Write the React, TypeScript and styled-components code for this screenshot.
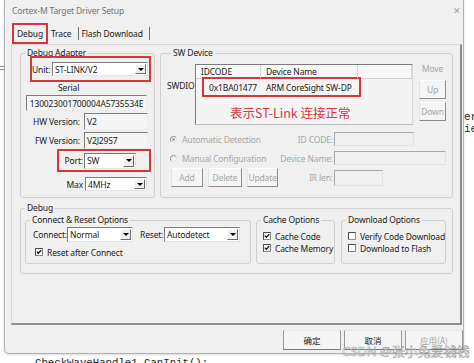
import React from "react";
import styled, { createGlobalStyle, css } from "styled-components";

const GlobalStyle = createGlobalStyle`
  html, body {
    margin: 0;
    padding: 0;
    background: #ffffff;
  }
  body {
    font-family: "Noto Sans", "Noto Sans CJK SC", sans-serif;
    font-size: 8.5px;
    letter-spacing: -0.15px;
    color: #1b1b1b;
  }
  *, *::before, *::after {
    box-sizing: border-box;
  }
`;

const RED = "#d6373d";
const GRAY_TEXT = "#a6a6a6";

// little drawn controls
function CheckBox({ checked }: { checked?: boolean }) {
  return (
    <svg width="8" height="8" viewBox="0 0 8 8">
      <rect x="0.5" y="0.5" width="7" height="7" fill="#fff" stroke="#8a8a8a" />
      <path d="M0.5 7.5 V0.5 H7.5" fill="none" stroke="#4a4a4a" />
      {checked && (
        <path d="M1.8 3.6 L3.3 5.3 L6.3 2.1" fill="none" stroke="#111" strokeWidth="1.3" />
      )}
    </svg>
  );
}

function RadioDot({ selected }: { selected?: boolean }) {
  return (
    <svg width="7" height="7" viewBox="0 0 7 7">
      <circle cx="3.5" cy="3.5" r="3" fill="#f4f4f4" stroke="#e2e2e2" />
      <path d="M1.2 5.6 A3 3 0 0 1 5.8 1.4" fill="none" stroke="#8e8e8e" />
      {selected && <circle cx="3.5" cy="3.5" r="1.3" fill="#9a9a9a" />}
    </svg>
  );
}

function Combo({ value, w, h = 15 }: { value: string; w: number; h?: number }) {
  return (
    <Select style={{ width: w, height: h }}>
      <SelectValue>{value}</SelectValue>
      <DropButton />
    </Select>
  );
}

function App() {
  return (
    <>
      <GlobalStyle />
      <Screen>
        <EditorMarks />
        <EditorTail>{"er\nie"}</EditorTail>
        <Window>
          <TitleBar>
            <Caption>Cortex-M Target Driver Setup</Caption>
            <CloseGlyph>✕</CloseGlyph>
          </TitleBar>
          <TabStrip>
            <Tab $active>Debug</Tab>
            <Tab>Trace</Tab>
            <Tab>Flash Download</Tab>
          </TabStrip>

          <TabPanel>
            <TopRow>
              <AdapterGroup>
                <GroupTitle>Debug Adapter</GroupTitle>
                <UnitCallout>
                  <span>Unit:</span>
                  <Combo value="ST-LINK/V2" w={96} h={14} />
                </UnitCallout>
                <SerialCaption>Serial</SerialCaption>
                <SerialBox>130023001700004A5735534E</SerialBox>
                <VersionRow>
                  <RowLabel>HW Version:</RowLabel>
                  <ValueBox>V2</ValueBox>
                </VersionRow>
                <VersionRow>
                  <RowLabel>FW Version:</RowLabel>
                  <ValueBox>V2J29S7</ValueBox>
                </VersionRow>
                <PortCallout>
                  <RowLabel>Port:</RowLabel>
                  <Combo value="SW" w={52} h={16} />
                </PortCallout>
                <MaxRow>
                  <RowLabel>Max</RowLabel>
                  <Combo value="4MHz" w={62} h={14} />
                </MaxRow>
              </AdapterGroup>

              <DeviceGroup>
                <GroupTitle>SW Device</GroupTitle>
                <ChainRow>
                  <PortName>SWDIO</PortName>
                  <ChainList>
                    <ListHeader>
                      <HeaderCell $w={65}>IDCODE</HeaderCell>
                      <HeaderCell $w={97}>Device Name</HeaderCell>
                      <HeaderCell />
                    </ListHeader>
                    <DeviceRow>
                      <DeviceCell $w={57}>0x1BA01477</DeviceCell>
                      <DeviceCell>ARM CoreSight SW-DP</DeviceCell>
                    </DeviceRow>
                    <StatusNote>表示ST-Link 连接正常</StatusNote>
                  </ChainList>
                  <MoveColumn>
                    <MoveCaption>Move</MoveCaption>
                    <SideButton>Up</SideButton>
                    <SideButton>Down</SideButton>
                  </MoveColumn>
                </ChainRow>

                <ConfigRow $mt={7} $h={14}>
                  <ConfigLeft>
                    <RadioOption>
                      <RadioDot selected />
                      Automatic Detection
                    </RadioOption>
                  </ConfigLeft>
                  <ConfigLabel>ID CODE:</ConfigLabel>
                  <DisabledBox $w={80} $h={14} />
                </ConfigRow>
                <ConfigRow $mt={5} $h={14}>
                  <ConfigLeft>
                    <RadioOption>
                      <RadioDot />
                      Manual Configuration
                    </RadioOption>
                  </ConfigLeft>
                  <ConfigLabel>Device Name:</ConfigLabel>
                  <DisabledBox $w={112} $h={14} />
                </ConfigRow>
                <ConfigRow $mt={3} $h={19}>
                  <ConfigLeft>
                    <ChainButtons>
                      <SideButton $w={34}>Add</SideButton>
                      <SideButton $w={37}>Delete</SideButton>
                      <SideButton $w={33}>Update</SideButton>
                    </ChainButtons>
                  </ConfigLeft>
                  <ConfigLabel>IR len:</ConfigLabel>
                  <DisabledBox $w={49} $h={16} />
                </ConfigRow>
              </DeviceGroup>
            </TopRow>

            <DebugGroup>
              <GroupTitle>Debug</GroupTitle>
              <DebugBody>
                <ConnectGroup>
                  <GroupTitle>Connect &amp; Reset Options</GroupTitle>
                  <ConnectRow>
                    <InlineLabel $w={34}>Connect:</InlineLabel>
                    <Combo value="Normal" w={66} />
                    <InlineLabel $w={24} $ml={7}>
                      Reset:
                    </InlineLabel>
                    <Combo value="Autodetect" w={76} />
                  </ConnectRow>
                  <CheckRow $first>
                    <CheckBox checked />
                    Reset after Connect
                  </CheckRow>
                </ConnectGroup>
                <CacheGroup>
                  <GroupTitle>Cache Options</GroupTitle>
                  <CheckList>
                    <CheckRow>
                      <CheckBox checked />
                      Cache Code
                    </CheckRow>
                    <CheckRow>
                      <CheckBox checked />
                      Cache Memory
                    </CheckRow>
                  </CheckList>
                </CacheGroup>
                <DownloadGroup>
                  <GroupTitle>Download Options</GroupTitle>
                  <CheckList>
                    <CheckRow>
                      <CheckBox />
                      Verify Code Download
                    </CheckRow>
                    <CheckRow>
                      <CheckBox />
                      Download to Flash
                    </CheckRow>
                  </CheckList>
                </DownloadGroup>
              </DebugBody>
            </DebugGroup>
          </TabPanel>

          <DialogButtons>
            <DialogButton>确定</DialogButton>
            <DialogButton>取消</DialogButton>
            <DialogButton $disabled>应用(A)</DialogButton>
          </DialogButtons>
        </Window>
        <CodeLine>CheckWaveHandle1.CanInit();</CodeLine>
        <Watermark>CSDN @张小兔爱钱钱</Watermark>
      </Screen>
    </>
  );
}

const Screen = styled.div`
  position: relative;
  width: 474px;
  height: 363px;
  overflow: hidden;
  background: #ffffff;
  display: flex;
  flex-direction: column;
`;

// bits of the code editor behind the dialog
const EditorMarks = styled.div`
  position: absolute;
  left: 0;
  top: 66px;
  width: 5px;
  height: 4px;
  border-top: 1px solid #8a8a8a;
  border-bottom: 1px solid #8a8a8a;
`;

const EditorTail = styled.div`
  position: absolute;
  left: 464px;
  top: 111px;
  font-family: "Liberation Mono", monospace;
  font-size: 11px;
  line-height: 12px;
  letter-spacing: 0;
  color: #2a2a2a;
  white-space: pre;
`;

const Window = styled.div`
  flex: none;
  margin-left: 4px;
  width: 460px;
  height: 354px;
  display: flex;
  flex-direction: column;
  background: #f0f0f0;
  border: 1px solid #b2b2b2;
  border-top: none;
  border-radius: 0 0 5px 5px;
  box-shadow: 0 1px 2px rgba(0, 0, 0, 0.15);
`;

const TitleBar = styled.div`
  flex: none;
  height: 21px;
  display: flex;
  align-items: center;
  justify-content: space-between;
  padding: 0 2px 0 7px;
`;

const Caption = styled.span`
  color: #737373;
`;

const CloseGlyph = styled.span`
  font-size: 9px;
  color: #a0a0a0;
`;

const TabStrip = styled.div`
  flex: none;
  height: 23px;
  display: flex;
  align-items: flex-end;
  padding-left: 7px;
`;

const Tab = styled.div<{ $active?: boolean }>`
  height: 21px;
  display: flex;
  align-items: center;
  color: #1a1a1a;
  ${(p) =>
    p.$active
      ? css`
          padding: 0 3px;
          border: 2px solid ${RED};
        `
      : css`
          padding-left: 3px;
          &::after {
            content: "";
            width: 1px;
            height: 13px;
            margin-left: 6px;
            background: #6e6e6e;
          }
        `}
`;

const TabPanel = styled.div`
  flex: none;
  height: 281px;
  margin: 0 1px 0 6px;
  padding: 2px 7px 0 8px;
  border: 1px solid #dadada;
  border-right: 2px solid #8e8e8e;
  border-bottom: 2px solid #8e8e8e;
  display: flex;
  flex-direction: column;
`;

const TopRow = styled.div`
  display: flex;
  gap: 5px;
  height: 151px;
`;

const Group = styled.fieldset`
  margin: 0;
  padding: 0;
  min-width: 0;
  border: 1px solid #d0d0d0;
  border-radius: 3px;
  display: flex;
  flex-direction: column;
`;

const GroupTitle = styled.legend`
  margin-left: 4px;
  padding: 0 2px;
  line-height: 12px;
  color: #1b1b1b;
`;

const AdapterGroup = styled(Group)`
  width: 135px;
`;

const Callout = styled.div`
  display: flex;
  align-items: center;
  border: 2px solid ${RED};
`;

const UnitCallout = styled(Callout)`
  margin: -3px 0 0 9px;
  width: 121px;
  height: 26px;
  justify-content: space-between;
  padding-right: 1px;
`;

const Select = styled.div`
  display: flex;
  align-items: stretch;
  background: #ffffff;
  border: 1px solid;
  border-color: #7c7c7c #e4e4e4 #e4e4e4 #7c7c7c;
`;

const SelectValue = styled.span`
  flex: 1;
  display: flex;
  align-items: center;
  padding-left: 2px;
  white-space: nowrap;
  overflow: hidden;
`;

const DropButton = styled.span`
  width: 11px;
  margin: 1px;
  display: flex;
  align-items: center;
  justify-content: center;
  background: #f0f0f0;
  border: 1px solid;
  border-color: #ffffff #6a6a6a #6a6a6a #ffffff;
  &::before {
    content: "";
    border-left: 3px solid transparent;
    border-right: 3px solid transparent;
    border-top: 3px solid #000;
  }
`;

const SerialCaption = styled.div`
  height: 12px;
  line-height: 12px;
  padding-left: 37px;
`;

const SunkenBox = styled.div`
  display: flex;
  align-items: center;
  background: #f5f5f5;
  border: 1px solid;
  border-color: #7e7e7e #ececec #ececec #7e7e7e;
  padding-left: 2px;
  white-space: nowrap;
`;

const SerialBox = styled(SunkenBox)`
  margin: 1px 0 0 5px;
  width: 121px;
  height: 16px;
  justify-content: center;
  padding-left: 0;
`;

const VersionRow = styled.div`
  margin-top: 2px;
  height: 17px;
  display: grid;
  grid-template-columns: 59px 64px;
  column-gap: 4px;
`;

const RowLabel = styled.span`
  display: flex;
  align-items: center;
  justify-content: flex-end;
  white-space: nowrap;
`;

const ValueBox = styled(SunkenBox)``;

const PortCallout = styled(Callout)`
  margin-left: 36px;
  width: 94px;
  height: 23px;
  gap: 1px;
  & > ${RowLabel} {
    width: 24px;
  }
`;

const MaxRow = styled.div`
  margin-top: 4px;
  height: 16px;
  display: grid;
  grid-template-columns: 62px 62px;
  column-gap: 2px;
  align-items: center;
`;

const DeviceGroup = styled(Group)`
  flex: 1;
  padding-left: 6px;
`;

const ChainRow = styled.div`
  margin-top: 5px;
  height: 61px;
  display: flex;
`;

const PortName = styled.span`
  width: 28px;
  padding-top: 16px;
`;

const ChainList = styled.div`
  width: 218px;
  height: 61px;
  overflow: hidden;
  border: 1px solid;
  border-color: #7d7d7d #d8d8d8 #bdbdbd #7d7d7d;
  background: #f4f4f4;
`;

const ListHeader = styled.div`
  height: 14px;
  display: flex;
  border-bottom: 1px solid #cfcfcf;
  background: #f8f8f8;
`;

const HeaderCell = styled.span<{ $w?: number }>`
  ${(p) => (p.$w ? `width: ${p.$w}px;` : "flex: 1;")}
  padding-left: 5px;
  line-height: 13px;
  border-right: 1px solid #d6d6d6;
`;

const DeviceRow = styled.div`
  margin: -2px 0 0 6px;
  width: 159px;
  height: 20px;
  display: flex;
  align-items: center;
  padding-left: 5px;
  border: 2px solid ${RED};
`;

const DeviceCell = styled.span<{ $w?: number }>`
  ${(p) => (p.$w ? `width: ${p.$w}px;` : "")}
  white-space: nowrap;
`;

const StatusNote = styled.div`
  margin-top: 8px;
  padding-left: 34px;
  font-family: "Noto Sans CJK SC", "Noto Sans", sans-serif;
  font-size: 12.5px;
  line-height: 16px;
  letter-spacing: 0;
  color: #e0353b;
  white-space: nowrap;
`;

const MoveColumn = styled.div`
  margin-left: 6px;
  width: 27px;
  display: flex;
  flex-direction: column;
`;

const MoveCaption = styled.span`
  margin-top: -1px;
  height: 12px;
  line-height: 12px;
  text-align: center;
  color: ${GRAY_TEXT};
`;

const SideButton = styled.span<{ $w?: number }>`
  width: ${(p) => (p.$w ? `${p.$w}px` : "auto")};
  height: 19px;
  display: flex;
  align-items: center;
  justify-content: center;
  color: ${GRAY_TEXT};
  background: #f5f5f5;
  border: 1px solid;
  border-color: #ffffff #8c8c8c #8c8c8c #e4e4e4;
  ${MoveColumn} > &:nth-of-type(2) {
    margin-top: 5px;
  }
  ${MoveColumn} > &:nth-of-type(3) {
    margin-top: 3px;
  }
`;

const ConfigRow = styled.div<{ $mt: number; $h: number }>`
  margin-top: ${(p) => p.$mt}px;
  height: ${(p) => p.$h}px;
  display: flex;
  align-items: center;
`;

const ConfigLeft = styled.div`
  width: 111px;
  flex: none;
  white-space: nowrap;
`;

const RadioOption = styled.span`
  padding-left: 3px;
  display: flex;
  align-items: center;
  gap: 5px;
  color: ${GRAY_TEXT};
`;

const ChainButtons = styled.div`
  padding-left: 4px;
  display: flex;
  gap: 5px;
`;

const ConfigLabel = styled.span`
  width: 55px;
  flex: none;
  display: flex;
  justify-content: flex-end;
  white-space: nowrap;
  color: ${GRAY_TEXT};
`;

const DisabledBox = styled.div<{ $w: number; $h: number }>`
  margin-left: 1px;
  width: ${(p) => p.$w}px;
  height: ${(p) => p.$h}px;
  background: #f0f0f0;
  border: 1px solid;
  border-color: #a9a9a9 #e2e2e2 #e2e2e2 #a9a9a9;
`;

const DebugGroup = styled(Group)`
  margin-top: 4px;
  height: 72px;
`;

const DebugBody = styled.div`
  display: flex;
  padding-left: 4px;
`;

const ConnectGroup = styled(Group)`
  width: 226px;
  height: 50px;
`;

const CacheGroup = styled(Group)`
  margin-left: 5px;
  width: 79px;
  height: 50px;
`;

const DownloadGroup = styled(Group)`
  margin-left: 6px;
  width: 105px;
  height: 50px;
`;

const ConnectRow = styled.div`
  margin-top: 1px;
  height: 15px;
  padding-left: 7px;
  display: flex;
  align-items: center;
`;

const InlineLabel = styled.span<{ $w: number; $ml?: number }>`
  width: ${(p) => p.$w}px;
  margin-left: ${(p) => p.$ml ?? 0}px;
  white-space: nowrap;
`;

const CheckList = styled.div`
  margin-top: 4px;
  padding-left: 6px;
  overflow: hidden;
  display: flex;
  flex-direction: column;
`;

const CheckRow = styled.div<{ $first?: boolean }>`
  height: 12px;
  display: flex;
  align-items: center;
  gap: 4px;
  white-space: nowrap;
  ${(p) =>
    p.$first &&
    css`
      margin-top: 3px;
      height: 14px;
      padding-left: 9px;
    `}
`;

const DialogButtons = styled.div`
  display: flex;
  justify-content: flex-end;
  gap: 3px;
  padding-top: 5px;
`;

const DialogButton = styled.span<{ $disabled?: boolean }>`
  width: 58px;
  height: 20px;
  display: flex;
  align-items: center;
  justify-content: center;
  font-family: "Noto Sans CJK SC", "Noto Sans", sans-serif;
  letter-spacing: 0;
  color: ${(p) => (p.$disabled ? GRAY_TEXT : "#222")};
  background: #f5f5f5;
  border: 1px solid;
  border-color: #e6e6e6 #9a9a9a #7a7a7a #9a9a9a;
`;

const CodeLine = styled.div`
  margin-top: 2px;
  padding-left: 35px;
  font-family: "Liberation Mono", monospace;
  font-size: 10.7px;
  line-height: 14px;
  letter-spacing: 0;
  color: #222;
  white-space: pre;
`;

const Watermark = styled.div`
  position: absolute;
  left: 342px;
  top: 343px;
  font-family: "Noto Sans", "Noto Sans CJK SC", sans-serif;
  font-size: 13px;
  line-height: 17px;
  letter-spacing: 0;
  color: rgba(255, 255, 255, 0.75);
  -webkit-text-stroke: 0.5px rgba(80, 80, 80, 0.6);
  white-space: nowrap;
`;

export default App;
